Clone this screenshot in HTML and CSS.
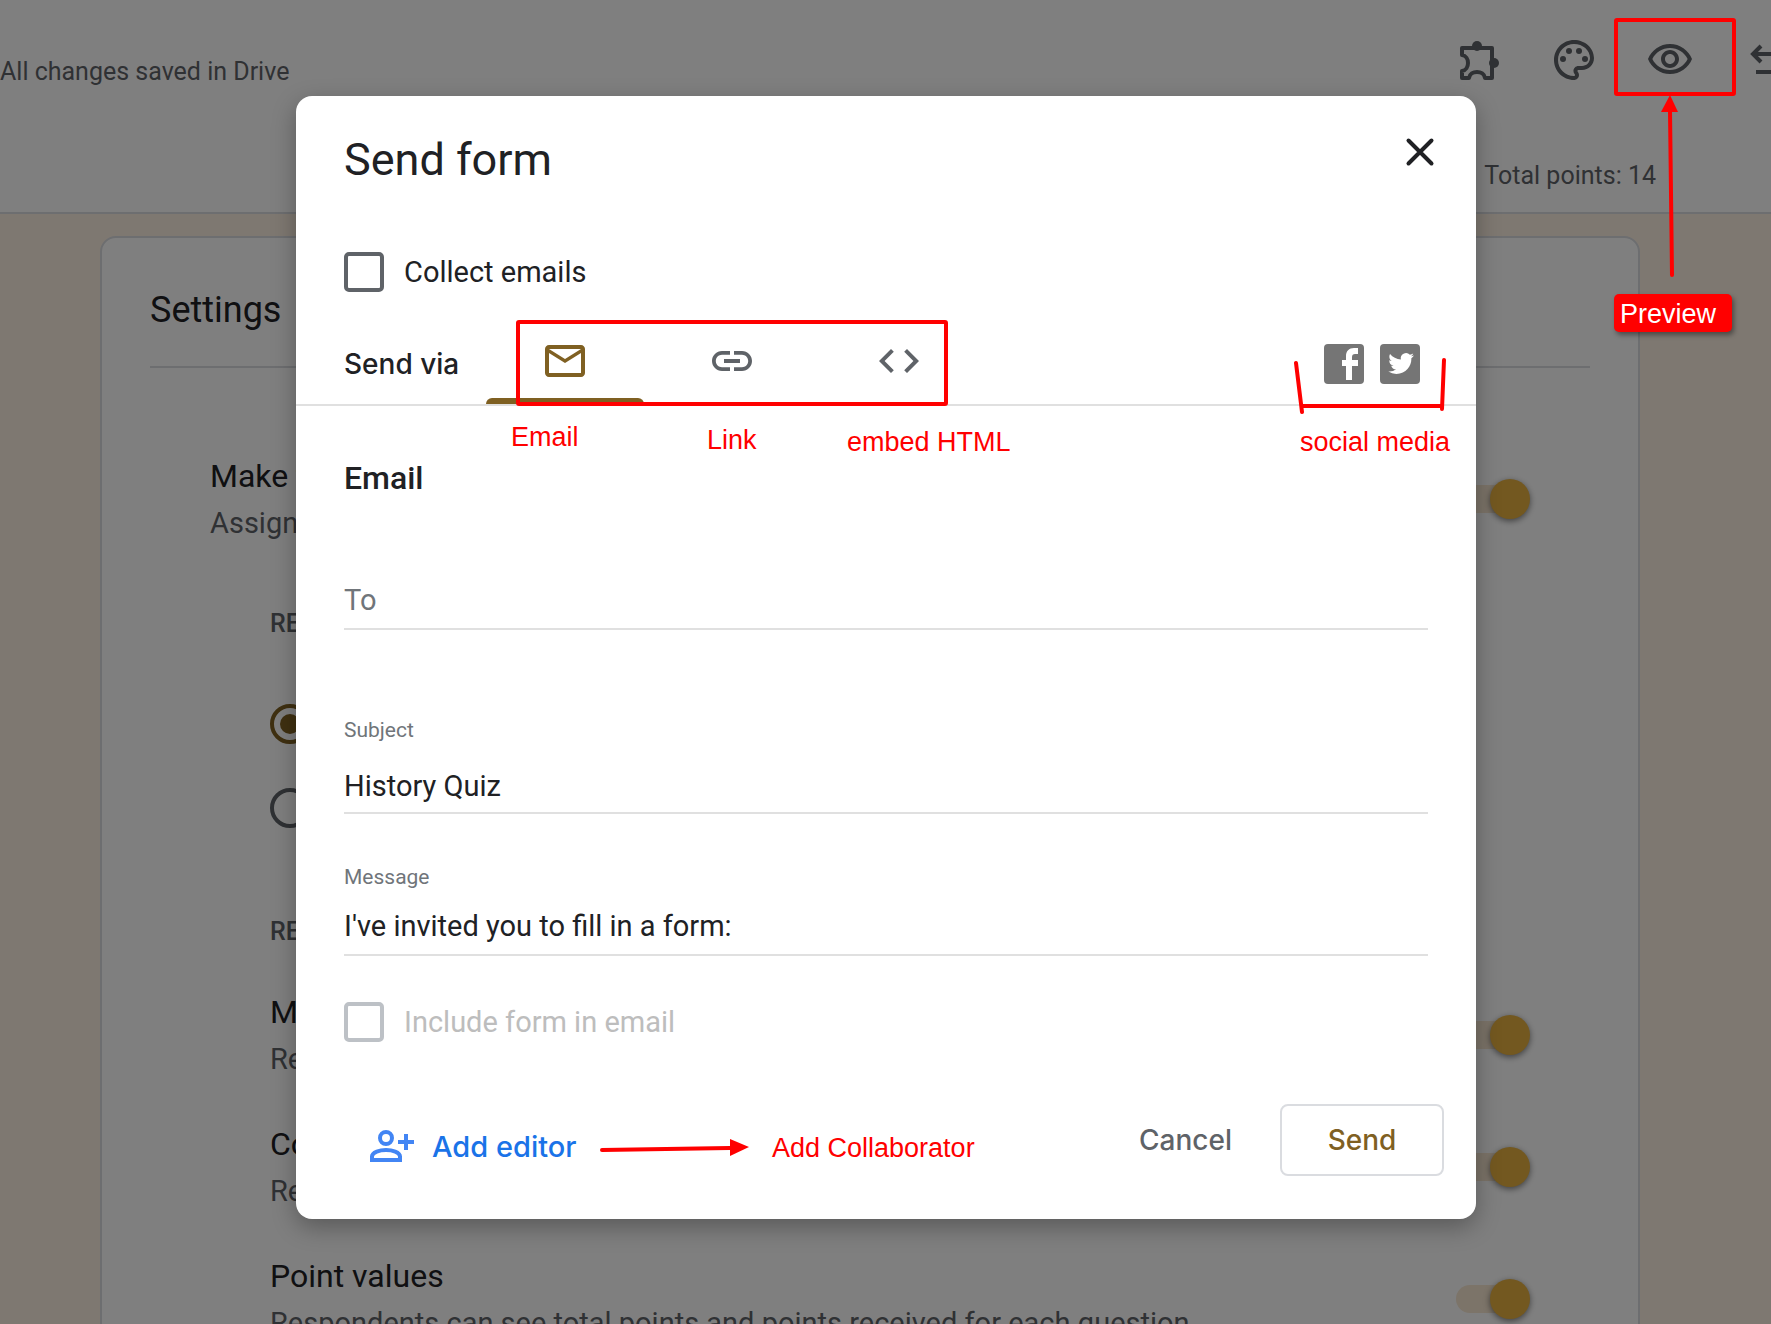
FILE: index.html
```html
<!DOCTYPE html>
<html lang="en">
<head>
    <meta charset="UTF-8" />
    <meta name="viewport" content="width=device-width, initial-scale=1.0"/>
    <title>Send form</title>
    <link rel="stylesheet" href="styles.css">
</head>
<body>
<div class="app">
    <header class="topbar">
        <div class="topbar-row">
            <span class="save-status">All changes saved in Drive</span>
            <div class="toolbar">
                <button class="icon-button" aria-label="Add-ons">
                    <svg class="icon" viewBox="0 0 48 48"><path d="M8 12V19C16 20 16 34 8 35V42H15C16 34 30 34 31 42H38V12Z" fill="none" stroke="currentColor" stroke-width="4" stroke-linejoin="round"/><circle cx="23" cy="10" r="5"/><circle cx="40" cy="27" r="5"/></svg>
                </button>
                <button class="icon-button" aria-label="Customise theme">
                    <svg class="icon" viewBox="0 0 24 24"><path d="M12 22C6.49 22 2 17.51 2 12S6.49 2 12 2s10 4.04 10 9c0 3.31-2.69 6-6 6h-1.77c-.28 0-.5.22-.5.5 0 .12.05.23.13.33.41.47.64 1.06.64 1.67 0 1.38-1.12 2.5-2.5 2.5zm0-18c-4.41 0-8 3.59-8 8s3.59 8 8 8c.28 0 .5-.22.5-.5 0-.16-.08-.28-.14-.35-.41-.46-.63-1.05-.63-1.65 0-1.38 1.12-2.5 2.5-2.5H16c2.21 0 4-1.79 4-4 0-3.86-3.59-7-8-7z"/><circle cx="6.5" cy="11.5" r="1.5"/><circle cx="9.5" cy="7.5" r="1.5"/><circle cx="14.5" cy="7.5" r="1.5"/><circle cx="17.5" cy="11.5" r="1.5"/></svg>
                </button>
                <button class="icon-button" aria-label="Preview">
                    <svg class="icon" viewBox="0 0 24 24"><path d="M12 6c3.79 0 7.17 2.13 8.82 5.5C19.17 14.87 15.79 17 12 17s-7.17-2.13-8.82-5.5C4.83 8.13 8.21 6 12 6m0-2C7 4 2.73 7.11 1 11.5 2.73 15.89 7 19 12 19s9.27-3.11 11-7.5C21.27 7.11 17 4 12 4zm0 5c1.38 0 2.5 1.12 2.5 2.5S13.38 14 12 14s-2.5-1.12-2.5-2.5S10.62 9 12 9m0-2c-2.48 0-4.5 2.02-4.5 4.5S9.52 16 12 16s4.5-2.02 4.5-4.5S14.48 7 12 7z"/></svg>
                </button>
                <button class="icon-button clipped" aria-label="Undo">
                    <svg class="icon" viewBox="0 0 48 48"><path d="M19 10L11 18L19 26M11 18H40M14 36H34" fill="none" stroke="currentColor" stroke-width="4"/></svg>
                </button>
            </div>
        </div>
        <p class="total-points">Total points: 14</p>
    </header>

    <main class="page">
        <section class="card">
            <h1>Settings</h1>
            <div class="settings">
                <div class="setting">
                    <div>
                        <label class="setting-title" for="quiz">Make this a quiz</label>
                        <p class="setting-text">Assign point values, set answers</p>
                    </div>
                    <input type="checkbox" class="toggle" id="quiz" checked>
                </div>

                <div class="subsettings">
                    <h2>RELEASE MARKS</h2>
                    <div class="radios">
                        <label><input type="radio" name="release" checked>Immediately</label>
                        <label><input type="radio" name="release">Later</label>
                    </div>

                    <h2>RESPONDENT SETTINGS</h2>
                    <div class="setting-list">
                        <div class="setting">
                            <div>
                                <label class="setting-title" for="missed">Missed questions</label>
                                <p class="setting-text">Respondents can see missed questions</p>
                            </div>
                            <input type="checkbox" class="toggle" id="missed" checked>
                        </div>
                        <div class="setting">
                            <div>
                                <label class="setting-title" for="correct">Correct answers</label>
                                <p class="setting-text">Respondents can see correct answers</p>
                            </div>
                            <input type="checkbox" class="toggle" id="correct" checked>
                        </div>
                        <div class="setting">
                            <div>
                                <label class="setting-title" for="points">Point values</label>
                                <p class="setting-text">Respondents can see total points and points received for each question</p>
                            </div>
                            <input type="checkbox" class="toggle" id="points" checked>
                        </div>
                    </div>
                </div>
            </div>
        </section>
    </main>
</div>

<div class="overlay">
    <form class="modal" role="dialog" aria-labelledby="modalTitle">
        <div class="modal-header">
            <h2 id="modalTitle">Send form</h2>
            <button type="button" class="icon-button close" aria-label="Close">
                <svg class="icon" viewBox="0 0 48 48"><path d="M12.500 12.500L35.500 35.500M35.500 12.500L12.500 35.500" fill="none" stroke="currentColor" stroke-width="4" stroke-linecap="round"/></svg>
            </button>
        </div>

        <label class="check collect"><input type="checkbox">Collect emails</label>

        <div class="send-via">
            <span class="send-via-label">Send via</span>
            <div class="tabs" role="tablist">
                <button type="button" class="tab active" role="tab" aria-label="Email">
                    <svg class="icon" viewBox="0 0 24 24"><path d="M22 6c0-1.100-.9-2-2-2H4c-1.100 0-2 .9-2 2v12c0 1.100.9 2 2 2h16c1.100 0 2-.9 2-2V6zm-2 0l-8 5-8-5h16zm0 12H4V8l8 5 8-5v10z"/></svg>
                </button>
                <button type="button" class="tab" role="tab" aria-label="Link">
                    <svg class="icon" viewBox="0 0 24 24"><path d="M3.9 12c0-1.71 1.39-3.1 3.1-3.1h4V7H7c-2.76 0-5 2.24-5 5s2.24 5 5 5h4v-1.9H7c-1.71 0-3.1-1.39-3.1-3.1zM8 13h8v-2H8v2zm9-6h-4v1.9h4c1.71 0 3.1 1.39 3.1 3.1s-1.39 3.1-3.1 3.1h-4V17h4c2.76 0 5-2.24 5-5s-2.24-5-5-5z"/></svg>
                </button>
                <button type="button" class="tab" role="tab" aria-label="Embed HTML">
                    <svg class="icon" viewBox="0 0 24 24"><path d="M9.4 16.6L4.8 12l4.6-4.6L8 6l-6 6 6 6 1.4-1.4zm5.2 0l4.6-4.6-4.6-4.6L16 6l6 6-6 6-1.4-1.4z"/></svg>
                </button>
            </div>
            <div class="social">
                <button type="button" aria-label="Share on Facebook">
                    <svg viewBox="0 0 40 40"><rect width="40" height="40" rx="4" fill="#757575"/><path d="M34 4v6h-3c-2 0-3 1-3 3v3h6v6h-6v14h-6V22h-4v-6h4v-4c0-5 3-8 8-8z" fill="#fff"/></svg>
                </button>
                <button type="button" aria-label="Share on Twitter">
                    <svg viewBox="0 0 40 40"><rect width="40" height="40" rx="4" fill="#757575"/><path transform="translate(8.3 6.6) scale(1.07)" fill="#fff" d="M23.953 4.57a10 10 0 01-2.825.775 4.958 4.958 0 002.163-2.723c-.951.555-2.005.959-3.127 1.184a4.92 4.92 0 00-8.384 4.482C7.69 8.095 4.067 6.13 1.64 3.162a4.822 4.822 0 00-.666 2.475c0 1.71.87 3.213 2.188 4.096a4.904 4.904 0 01-2.228-.616v.06a4.923 4.923 0 003.946 4.827 4.996 4.996 0 01-2.212.085 4.936 4.936 0 004.604 3.417 9.867 9.867 0 01-6.102 2.105c-.39 0-.779-.023-1.17-.067a13.995 13.995 0 007.557 2.209c9.053 0 13.998-7.496 13.998-13.985 0-.21 0-.42-.015-.63A9.935 9.935 0 0024 4.59z"/></svg>
                </button>
            </div>
        </div>

        <div class="modal-body">
            <h3>Email</h3>
            <input type="text" class="to" placeholder="To" aria-label="To">
            <label class="field-label" for="subject">Subject</label>
            <input type="text" class="subject" id="subject" value="History Quiz">
            <label class="field-label message-label" for="message">Message</label>
            <input type="text" id="message" value="I've invited you to fill in a form:">
        </div>

        <label class="check include"><input type="checkbox" disabled>Include form in email</label>

        <div class="modal-footer">
            <button type="button" class="add-editor">
                <svg viewBox="0 0 44 32" fill="none" stroke="#4285f4" stroke-width="4"><circle cx="16" cy="8" r="6"/><path d="M2 30V26.600C2 22 10 20 16 20S30 22 30 26.600V30ZM28 12H44M36 4V20"/></svg>
                Add editor
            </button>
            <div class="actions">
                <button type="button" class="cancel">Cancel</button>
                <button type="submit" class="send">Send</button>
            </div>
        </div>

        <!-- notes drawn over the dialog -->
        <div class="note-box tabs-box"></div>
        <span class="note note-email">Email</span>
        <span class="note note-link">Link</span>
        <span class="note note-embed">embed HTML</span>
        <svg class="note-bracket" viewBox="0 0 152 56" fill="none" stroke="#f00" stroke-width="4" stroke-linecap="round"><path d="M2 5L8 54M8 48H148M150 2L148 51"/></svg>
        <span class="note note-social">social media</span>
        <svg class="note-arrow" viewBox="0 0 150 18"><path d="M2 11L130 9" stroke="#f00" stroke-width="4" stroke-linecap="round"/><path d="M130 0L149 8L130 17Z" fill="#f00"/></svg>
        <span class="note note-collaborator">Add Collaborator</span>
    </form>

    <div class="note-box preview-box"></div>
    <svg class="preview-arrow" viewBox="0 0 18 184"><path d="M9 16L11 180" stroke="#f00" stroke-width="4" stroke-linecap="round"/><path d="M9 0L17 17H0Z" fill="#f00"/></svg>
    <span class="note preview-note">Preview</span>
</div>
</body>
</html>
```
FILE: styles.css
```css
* {
    box-sizing: border-box;
    margin: 0;
    padding: 0;
}

body {
    font-family: Roboto, "Liberation Sans", sans-serif;
    font-size: 29px;
    color: #202124;
    overflow: hidden;
}

button {
    display: flex;
    align-items: center;
    border: none;
    background: none;
    color: inherit;
    font-family: Inter, Roboto, sans-serif;
    font-size: 28px;
    font-weight: 500;
    cursor: pointer;
}

.icon {
    display: block;
    flex: none;
    width: 48px;
    height: 48px;
    fill: currentColor;
}

/* page behind the dialog */
.app {
    display: flex;
    flex-direction: column;
    height: 100vh;
    overflow: hidden;
}

.topbar {
    flex: none;
    height: 214px;
    border-bottom: 2px solid #dadce0;
    color: #5f6368;
    font-size: 25px;
}

.topbar-row {
    display: flex;
    justify-content: space-between;
    padding-top: 36px;
}

.save-status {
    line-height: 72px;
}

.toolbar {
    display: flex;
    gap: 48px;
}

.icon-button {
    width: 48px;
    height: 48px;
}

.clipped {
    width: 29px;
    overflow: hidden;
}

.total-points {
    margin-top: 52px;
    padding-right: 115px;
    line-height: 32px;
    text-align: right;
}

.page {
    flex: 1;
    min-height: 0;
    padding: 22px 131px 0 100px;
    background-color: #fdf1e3;
}

.card {
    padding: 48px 48px 0;
    border: 2px solid #dadce0;
    border-radius: 16px;
    background-color: white;
}

h1 {
    padding-bottom: 32px;
    border-bottom: 2px solid #dadce0;
    font-size: 36px;
    font-weight: 400;
    line-height: 48px;
}

.settings {
    padding: 84px 60px 0;
}

.setting {
    display: flex;
    justify-content: space-between;
    align-items: center;
}

.setting-title {
    display: block;
    font-size: 32px;
    line-height: 48px;
}

.setting-text {
    color: #5f6368;
    line-height: 46px;
}

.toggle {
    display: grid;
    align-items: center;
    width: 74px;
    height: 40px;
    appearance: none;
}

.toggle::before,
.toggle::after {
    content: "";
    grid-area: 1 / 1;
    border-radius: 20px;
}

.toggle::before {
    width: 68px;
    height: 28px;
    background-color: #f8e8d2;
}

.toggle::after {
    justify-self: end;
    width: 40px;
    height: 40px;
    background-color: #e6b040;
    box-shadow: 0 2px 6px rgba(0, 0, 0, 0.5);
}

.subsettings {
    padding-left: 60px;
}

.subsettings h2 {
    margin-top: 62px;
    color: #5f6368;
    font-size: 25px;
    font-weight: 500;
    line-height: 32px;
}

.radios {
    display: flex;
    flex-direction: column;
    gap: 44px;
    margin: 64px 0 88px;
}

.radios label {
    display: flex;
    align-items: center;
    gap: 20px;
    height: 40px;
}

.radios input {
    display: grid;
    place-items: center;
    width: 40px;
    height: 40px;
    border: 4px solid #5f6368;
    border-radius: 50%;
    appearance: none;
}

.radios input:checked {
    border-color: #7f6022;
}

.radios input:checked::before {
    content: "";
    width: 20px;
    height: 20px;
    border-radius: 50%;
    background-color: #7f6022;
}

.setting-list {
    display: flex;
    flex-direction: column;
    gap: 38px;
    margin-top: 40px;
}

/* dialog */
.overlay {
    position: absolute;
    inset: 0;
    display: flex;
    align-items: flex-start;
    padding: 96px 295px 0 296px;
    background-color: rgba(0, 0, 0, 0.5);
}

.modal {
    position: relative;
    flex: 1;
    border-radius: 16px;
    background-color: white;
    box-shadow: 0 8px 24px rgba(0, 0, 0, 0.3);
}

.modal-header {
    display: flex;
    justify-content: space-between;
    padding: 32px 32px 0 48px;
}

.modal-header h2 {
    font-size: 45px;
    font-weight: 400;
    line-height: 64px;
}

.check {
    display: flex;
    align-items: center;
    gap: 20px;
    padding: 0 48px;
    line-height: 40px;
}

.check input {
    width: 40px;
    height: 40px;
    border: 4px solid #5f6368;
    border-radius: 5px;
    appearance: none;
}

.collect {
    margin-top: 60px;
}

.include {
    margin-top: 46px;
    color: #bdbdbd;
}

.include input {
    border-color: #bdc1c6;
}

.send-via {
    display: flex;
    align-items: center;
    margin-top: 32px;
    padding: 0 56px 0 48px;
    border-bottom: 2px solid #e0e0e0;
}

.send-via-label {
    flex: 0 0 142px;
    font-family: Inter, Roboto, sans-serif;
    font-size: 28px;
    font-weight: 500;
}

.tabs {
    display: flex;
    gap: 9px;
    color: #5f6368;
}

.tab {
    position: relative;
    justify-content: center;
    width: 158px;
    height: 80px;
    padding-bottom: 6px;
}

.tab.active {
    color: #7f6022;
}

.tab.active::after {
    content: "";
    position: absolute;
    right: 0;
    bottom: 0;
    left: 0;
    height: 6px;
    border-radius: 6px 6px 0 0;
    background-color: #7f6022;
}

.social {
    display: flex;
    gap: 16px;
    margin-left: auto;
}

.social svg {
    display: block;
    width: 40px;
    height: 40px;
}

.modal-body {
    padding: 52px 48px 0;
}

.modal-body h3 {
    font-size: 32px;
    font-weight: 500;
    line-height: 40px;
}

.modal-body input {
    display: block;
    width: 100%;
    height: 49px;
    padding-bottom: 10px;
    border: none;
    border-bottom: 2px solid #e0e0e0;
    outline: none;
    color: inherit;
    font-family: inherit;
    font-size: 29px;
}

.modal-body input::placeholder {
    color: #70757a;
}

.modal-body .to {
    margin: 83px 0 86px;
}

.modal-body .subject {
    padding-bottom: 5px;
}

.field-label {
    display: block;
    margin-bottom: 21px;
    color: #70757a;
    font-size: 21px;
    line-height: 28px;
}

.message-label {
    margin: 49px 0 16px;
}

.modal-footer {
    display: flex;
    justify-content: space-between;
    align-items: flex-start;
    margin-top: 62px;
    padding: 0 32px 31px 74px;
}

.add-editor {
    gap: 18px;
    height: 84px;
    color: #1a73e8;
    font-size: 29px;
}

.add-editor svg {
    width: 44px;
    height: 32px;
}

.actions {
    display: flex;
}

.cancel {
    padding: 0 48px;
    color: #5f6368;
}

.send {
    justify-content: center;
    width: 164px;
    height: 72px;
    border: 2px solid #dadce0;
    border-radius: 8px;
    color: #7f6022;
}

/* red notes */
.note {
    position: absolute;
    color: #f00;
    font-family: "Liberation Sans", Arial, sans-serif;
    font-size: 27px;
    line-height: 32px;
    white-space: nowrap;
}

.note-box {
    position: absolute;
    border: 4px solid #f00;
    border-radius: 3px;
}

.tabs-box {
    top: 224px;
    left: 220px;
    width: 432px;
    height: 86px;
}

.note-email {
    top: 325px;
    left: 215px;
}

.note-link {
    top: 328px;
    left: 411px;
}

.note-embed {
    top: 330px;
    left: 551px;
}

.note-bracket {
    position: absolute;
    top: 262px;
    right: 30px;
    width: 152px;
    height: 56px;
}

.note-social {
    top: 330px;
    right: 26px;
}

.note-arrow {
    position: absolute;
    top: 1043px;
    left: 304px;
    width: 150px;
    height: 18px;
}

.note-collaborator {
    top: 1036px;
    left: 476px;
}

.preview-box {
    top: 18px;
    right: 35px;
    width: 122px;
    height: 78px;
}

.preview-arrow {
    position: absolute;
    top: 95px;
    right: 92px;
    width: 18px;
    height: 184px;
}

.preview-note {
    top: 294px;
    right: 39px;
    padding: 4px 16px 2px 6px;
    border-radius: 5px;
    background-color: #f00;
    box-shadow: 2px 3px 5px rgba(0, 0, 0, 0.4);
    color: white;
}
```
